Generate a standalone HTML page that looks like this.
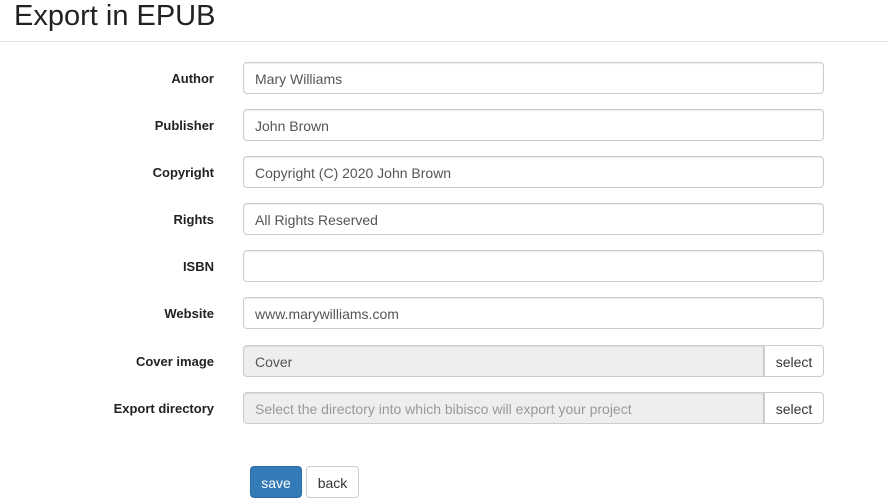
<!DOCTYPE html>
<html><head><style>
body{margin:0;width:888px;height:500px;overflow:hidden;background:#fff;font-family:"Liberation Sans",sans-serif;color:#333;position:relative}
h1{position:absolute;left:14px;top:0px;margin:0;font-size:29px;font-weight:normal;color:#222}
.hr{position:absolute;left:0;right:0;top:41px;border-top:1px solid #e5e5e5}
.lbl{position:absolute;right:674px;font-weight:bold;font-size:13px;color:#222;line-height:34px;white-space:nowrap}
.in{position:absolute;left:243px;width:568px;height:30px;border:1px solid #ccc;border-radius:4px;font-size:14px;line-height:32px;padding-left:11px;box-sizing:content-box;color:#555;box-shadow:inset 0 1px 1px rgba(0,0,0,.075)}
.g{background:#eee;width:508px;border-radius:4px 0 0 4px}
.ph{color:#999}
.sel{position:absolute;left:764px;width:58px;height:30px;border:1px solid #ccc;border-radius:0 4px 4px 0;font-size:14px;line-height:32px;text-align:center;color:#333;background:#fff}
.btn{position:absolute;top:466px;height:30px;border:1px solid #ccc;border-radius:4px;font-size:14px;line-height:32px;text-align:center}
</style></head><body>
<h1>Export in EPUB</h1><div class="hr"></div>
<div class="lbl" style="top:62px">Author</div><div class="in" style="top:62px">Mary Williams</div>
<div class="lbl" style="top:109px">Publisher</div><div class="in" style="top:109px">John Brown</div>
<div class="lbl" style="top:156px">Copyright</div><div class="in" style="top:156px">Copyright (C) 2020 John Brown</div>
<div class="lbl" style="top:203px">Rights</div><div class="in" style="top:203px">All Rights Reserved</div>
<div class="lbl" style="top:250px">ISBN</div><div class="in" style="top:250px"></div>
<div class="lbl" style="top:297px">Website</div><div class="in" style="top:297px">www.marywilliams.com</div>
<div class="lbl" style="top:345px">Cover image</div><div class="in g" style="top:345px">Cover</div><div class="sel" style="top:345px">select</div>
<div class="lbl" style="top:392px">Export directory</div><div class="in g ph" style="top:392px">Select the directory into which bibisco will export your project</div><div class="sel" style="top:392px">select</div>
<div class="btn" style="left:250px;width:50px;background:#337ab7;border-color:#2e6da4;color:#fff">save</div>
<div class="btn" style="left:306px;width:51px;background:#fff;color:#333">back</div>
</body></html>
